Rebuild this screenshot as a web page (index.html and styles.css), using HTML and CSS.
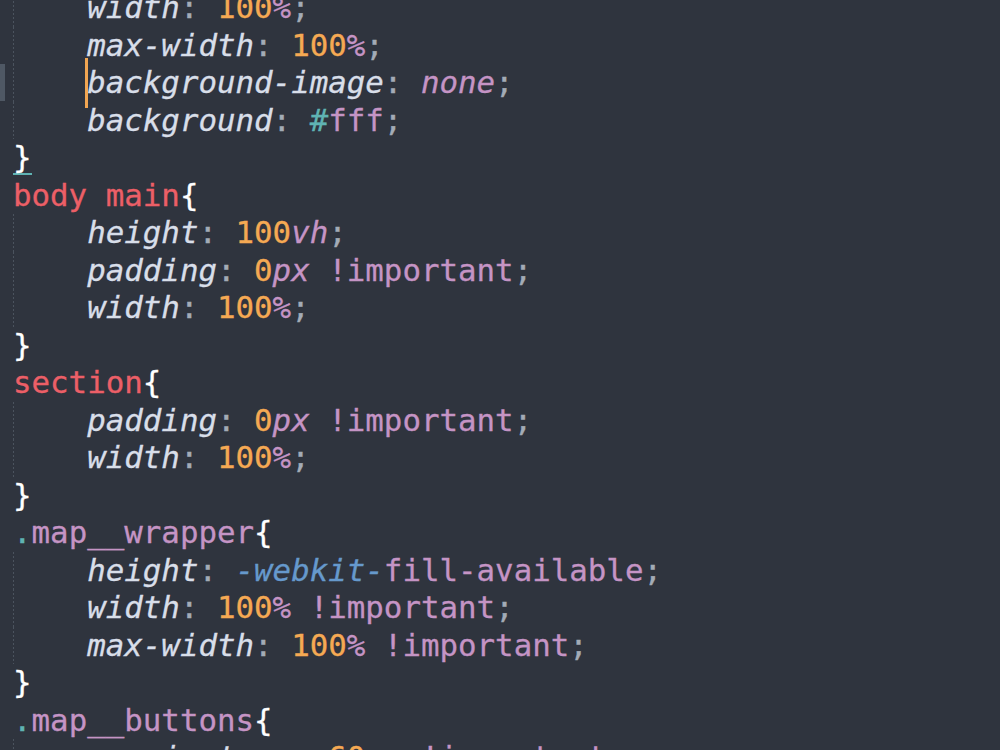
FILE: index.html
```html
<!DOCTYPE html>
<html>
<head>
<meta charset="utf-8">
<link rel="stylesheet" href="styles.css">
</head>
<body>
<div class="editor">
  <div class="line in"><span class="ind">    </span><span class="prop">width</span><span class="pn">: </span><span class="num">100</span><span class="unit">%</span><span class="pn">;</span></div>
  <div class="line in"><span class="ind">    </span><span class="prop">max-width</span><span class="pn">: </span><span class="num">100</span><span class="unit">%</span><span class="pn">;</span></div>
  <div class="line in current"><span class="ind">    </span><span class="caret"></span><span class="prop">background-image</span><span class="pn">: </span><span class="kw it">none</span><span class="pn">;</span></div>
  <div class="line in"><span class="ind">    </span><span class="prop">background</span><span class="pn">: </span><span class="hash">#</span><span class="kw">fff</span><span class="pn">;</span></div>
  <div class="line"><span class="brace match">}</span></div>
  <div class="line"><span class="sel">body main</span><span class="brace">{</span></div>
  <div class="line in"><span class="ind">    </span><span class="prop">height</span><span class="pn">: </span><span class="num">100</span><span class="unit it">vh</span><span class="pn">;</span></div>
  <div class="line in"><span class="ind">    </span><span class="prop">padding</span><span class="pn">: </span><span class="num">0</span><span class="unit it">px</span> <span class="kw">!important</span><span class="pn">;</span></div>
  <div class="line in"><span class="ind">    </span><span class="prop">width</span><span class="pn">: </span><span class="num">100</span><span class="unit">%</span><span class="pn">;</span></div>
  <div class="line"><span class="brace">}</span></div>
  <div class="line"><span class="sel">section</span><span class="brace">{</span></div>
  <div class="line in"><span class="ind">    </span><span class="prop">padding</span><span class="pn">: </span><span class="num">0</span><span class="unit it">px</span> <span class="kw">!important</span><span class="pn">;</span></div>
  <div class="line in"><span class="ind">    </span><span class="prop">width</span><span class="pn">: </span><span class="num">100</span><span class="unit">%</span><span class="pn">;</span></div>
  <div class="line"><span class="brace">}</span></div>
  <div class="line"><span class="hash">.</span><span class="cls">map__wrapper</span><span class="brace">{</span></div>
  <div class="line in"><span class="ind">    </span><span class="prop">height</span><span class="pn">: </span><span class="vendor">-webkit-</span><span class="kw">fill-available</span><span class="pn">;</span></div>
  <div class="line in"><span class="ind">    </span><span class="prop">width</span><span class="pn">: </span><span class="num">100</span><span class="unit">%</span> <span class="kw">!important</span><span class="pn">;</span></div>
  <div class="line in"><span class="ind">    </span><span class="prop">max-width</span><span class="pn">: </span><span class="num">100</span><span class="unit">%</span> <span class="kw">!important</span><span class="pn">;</span></div>
  <div class="line"><span class="brace">}</span></div>
  <div class="line"><span class="hash">.</span><span class="cls">map__buttons</span><span class="brace">{</span></div>
  <div class="line in"><span class="ind">    </span><span class="prop">margin-top</span><span class="pn">: </span><span class="num">-60</span><span class="unit it">px</span> <span class="kw">!important</span><span class="pn">;</span></div>
</div>
</body>
</html>
```

FILE: styles.css
```css
html, body {
  margin: 0;
  padding: 0;
  background: #2f343e;
  overflow: hidden;
  height: 100%;
}

.editor {
  margin-top: -10.75px;
  padding-left: 13px;
  font-family: "DejaVu Sans Mono", "Liberation Mono", monospace;
  font-size: 30.8px;
  line-height: 37.5px;
  color: #d8dee9;
  -webkit-text-stroke: 0.3px currentColor;
}

.line {
  position: relative;
  white-space: pre;
  height: 37.5px;
}

.line.in::before {
  content: "";
  position: absolute;
  left: 0;
  top: 0;
  bottom: 0;
  width: 1px;
  background-image: repeating-linear-gradient(to bottom, #4b535e 0 2px, transparent 2px 4px);
}

.line.current::after {
  content: "";
  position: absolute;
  left: -13px;
  top: 0;
  width: 5px;
  height: 37px;
  background: #4f5864;
}

.caret {
  display: inline-block;
  position: relative;
  width: 0;
  height: 37.5px;
  vertical-align: top;
}

.caret::before {
  content: "";
  position: absolute;
  left: -2px;
  top: -6px;
  width: 3px;
  height: 50px;
  background: #f2a652;
}

.prop {
  font-style: italic;
  color: #d8dee9;
}

.pn {
  color: #a3abb6;
}

.num {
  color: #f5a953;
}

.unit {
  color: #c594c5;
}

.it {
  font-style: italic;
}

.kw {
  color: #c594c5;
}

.hash {
  color: #5fb3b3;
}

.sel {
  color: #ec5f67;
}

.cls {
  color: #c594c5;
}

.brace {
  color: #ffffff;
}

.brace.match {
  display: inline-block;
  border-bottom: 2px solid #5fb3b3;
  height: 34px;
  vertical-align: top;
}

.vendor {
  color: #6699cc;
  font-style: italic;
}
```
